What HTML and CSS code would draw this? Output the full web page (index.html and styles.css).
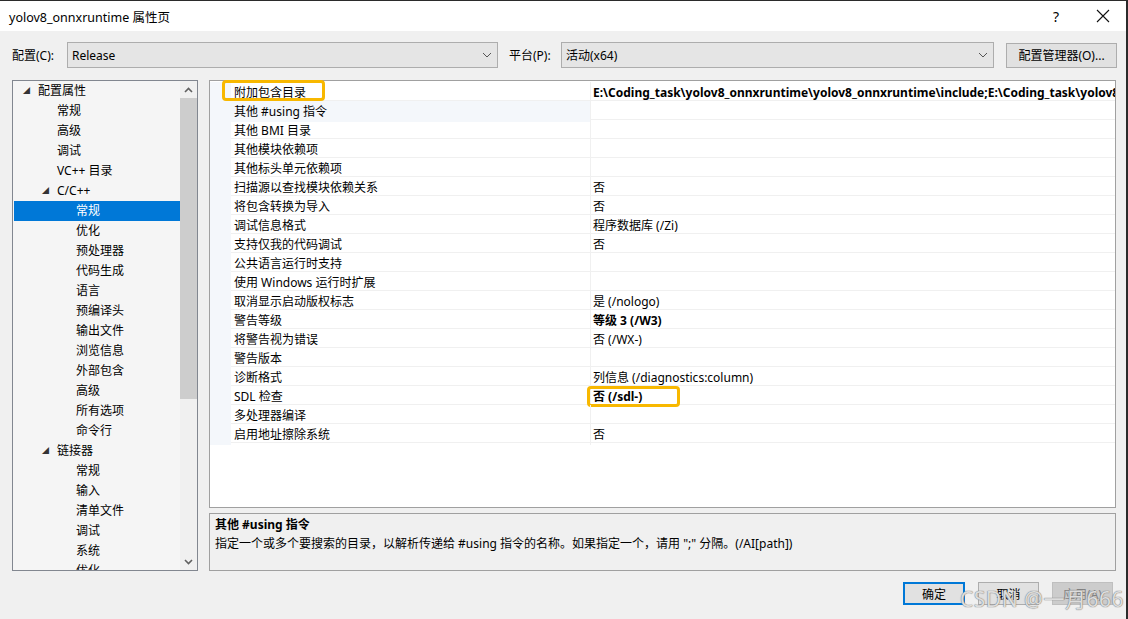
FILE: index.html
```html
<!DOCTYPE html>
<html lang="zh-CN">
<head>
    <meta charset="UTF-8">
    <title>yolov8_onnxruntime 属性页</title>
    <link rel="stylesheet" href="styles.css">
</head>
<body>
<div class="window">
    <div class="titlebar">
        <span class="title">yolov8_onnxruntime 属性页</span>
        <span class="title-btn help">?</span>
        <span class="title-btn close">
            <svg width="14" height="14" viewBox="0 0 14 14"><path d="M1 1 L13 13 M13 1 L1 13" stroke="#111" stroke-width="1.1" fill="none"/></svg>
        </span>
    </div>

    <div class="config-row">
        <label class="lbl">配置(C):</label>
        <div class="combo combo-config">
            <span>Release</span>
            <svg class="chev" width="10" height="6" viewBox="0 0 10 6"><path d="M1 1 L5 5 L9 1" stroke="#555" stroke-width="1" fill="none"/></svg>
        </div>
        <label class="lbl lbl-platform">平台(P):</label>
        <div class="combo combo-platform">
            <span>活动(x64)</span>
            <svg class="chev" width="10" height="6" viewBox="0 0 10 6"><path d="M1 1 L5 5 L9 1" stroke="#555" stroke-width="1" fill="none"/></svg>
        </div>
        <button class="btn btn-manager">配置管理器(O)...</button>
    </div>

    <div class="main">
        <div class="tree">
            <div class="tree-list">
                <div class="node lv0"><span class="arrow">◢</span>配置属性</div>
                <div class="node lv1">常规</div>
                <div class="node lv1">高级</div>
                <div class="node lv1">调试</div>
                <div class="node lv1">VC++ 目录</div>
                <div class="node lv1 open"><span class="arrow">◢</span>C/C++</div>
                <div class="node lv2 selected">常规</div>
                <div class="node lv2">优化</div>
                <div class="node lv2">预处理器</div>
                <div class="node lv2">代码生成</div>
                <div class="node lv2">语言</div>
                <div class="node lv2">预编译头</div>
                <div class="node lv2">输出文件</div>
                <div class="node lv2">浏览信息</div>
                <div class="node lv2">外部包含</div>
                <div class="node lv2">高级</div>
                <div class="node lv2">所有选项</div>
                <div class="node lv2">命令行</div>
                <div class="node lv1 open"><span class="arrow">◢</span>链接器</div>
                <div class="node lv2">常规</div>
                <div class="node lv2">输入</div>
                <div class="node lv2">清单文件</div>
                <div class="node lv2">调试</div>
                <div class="node lv2">系统</div>
                <div class="node lv2">优化</div>
            </div>
            <div class="scrollbar">
                <div class="sb-btn">
                    <svg width="9" height="6" viewBox="0 0 9 6"><path d="M1 5 L4.5 1.5 L8 5" stroke="#606060" stroke-width="1.6" fill="none"/></svg>
                </div>
                <div class="sb-track"><div class="sb-thumb"></div></div>
                <div class="sb-btn">
                    <svg width="9" height="6" viewBox="0 0 9 6"><path d="M1 1 L4.5 4.5 L8 1" stroke="#606060" stroke-width="1.6" fill="none"/></svg>
                </div>
            </div>
        </div>

        <div class="right">
            <div class="grid">
                <div class="row"><div class="gutter"></div><div class="name"><span class="mark mark-name"></span>附加包含目录</div><div class="value bold">E:\Coding_task\yolov8_onnxruntime\yolov8_onnxruntime\include;E:\Coding_task\yolov8_onnxruntime\onnxruntime\include</div></div>
                <div class="row hover"><div class="gutter"></div><div class="name">其他 #using 指令</div><div class="value"></div></div>
                <div class="row"><div class="gutter"></div><div class="name">其他 BMI 目录</div><div class="value"></div></div>
                <div class="row"><div class="gutter"></div><div class="name">其他模块依赖项</div><div class="value"></div></div>
                <div class="row"><div class="gutter"></div><div class="name">其他标头单元依赖项</div><div class="value"></div></div>
                <div class="row"><div class="gutter"></div><div class="name">扫描源以查找模块依赖关系</div><div class="value">否</div></div>
                <div class="row"><div class="gutter"></div><div class="name">将包含转换为导入</div><div class="value">否</div></div>
                <div class="row"><div class="gutter"></div><div class="name">调试信息格式</div><div class="value">程序数据库 (/Zi)</div></div>
                <div class="row"><div class="gutter"></div><div class="name">支持仅我的代码调试</div><div class="value">否</div></div>
                <div class="row"><div class="gutter"></div><div class="name">公共语言运行时支持</div><div class="value"></div></div>
                <div class="row"><div class="gutter"></div><div class="name">使用 Windows 运行时扩展</div><div class="value"></div></div>
                <div class="row"><div class="gutter"></div><div class="name">取消显示启动版权标志</div><div class="value">是 (/nologo)</div></div>
                <div class="row"><div class="gutter"></div><div class="name">警告等级</div><div class="value bold">等级 3 (/W3)</div></div>
                <div class="row"><div class="gutter"></div><div class="name">将警告视为错误</div><div class="value">否 (/WX-)</div></div>
                <div class="row"><div class="gutter"></div><div class="name">警告版本</div><div class="value"></div></div>
                <div class="row"><div class="gutter"></div><div class="name">诊断格式</div><div class="value">列信息 (/diagnostics:column)</div></div>
                <div class="row"><div class="gutter"></div><div class="name">SDL 检查</div><div class="value bold"><span class="mark mark-value"></span>否 (/sdl-)</div></div>
                <div class="row"><div class="gutter"></div><div class="name">多处理器编译</div><div class="value"></div></div>
                <div class="row"><div class="gutter"></div><div class="name">启用地址擦除系统</div><div class="value">否</div></div>
            </div>
            <div class="desc">
                <div class="desc-title">其他 #using 指令</div>
                <div class="desc-text">指定一个或多个要搜索的目录，以解析传递给 #using 指令的名称。如果指定一个，请用 ";" 分隔。(/AI[path])</div>
            </div>
        </div>
    </div>

    <div class="footer">
        <button class="btn btn-ok">确定</button>
        <button class="btn">取消</button>
        <button class="btn btn-disabled">应用(A)</button>
    </div>

    <div class="watermark">CSDN @一月666</div>
</div>
</body>
</html>
```

FILE: styles.css
```css
body {
    margin: 0;
    background-color: #2b2b2b;
}

.window {
    width: 1126px;
    height: 618px;
    margin-top: 1px;
    background-color: #f0f0f0;
    font-family: "Noto Sans", "Noto Sans CJK SC", sans-serif;
    font-size: 12px;
    color: #000;
    position: relative;
    overflow: hidden;
}

.titlebar {
    height: 30px;
    background-color: #fff;
    display: flex;
    align-items: center;
    padding-left: 9px;
}

.title {
    flex: 1;
    font-size: 12.5px;
}

.title-btn {
    width: 46px;
    height: 30px;
    display: flex;
    align-items: center;
    justify-content: center;
    font-size: 14px;
}

.help {
    margin-right: 1px;
}

.config-row {
    display: flex;
    align-items: center;
    height: 26px;
    margin-top: 11px;
    padding-left: 12px;
}

.lbl {
    width: 55px;
}

.lbl-platform {
    margin-left: 11px;
    width: 52px;
}

.combo {
    border: 1px solid #adadad;
    background-color: #e5e5e5;
    display: flex;
    align-items: center;
    padding-left: 4px;
    box-sizing: border-box;
    height: 26px;
}

.combo span {
    flex: 1;
}

.chev {
    margin-right: 5px;
}

.combo-config {
    width: 431px;
}

.combo-platform {
    width: 433px;
}

.btn {
    font-family: inherit;
    font-size: 12px;
    background-color: #e1e1e1;
    border: 1px solid #adadad;
    color: #000;
    padding: 0;
    height: 23px;
    width: 61px;
}

.btn-manager {
    margin-left: 12px;
    width: 111px;
    height: 25px;
}

.main {
    display: flex;
    margin-top: 12px;
    padding-left: 12px;
    gap: 11px;
    height: 491px;
}

.tree {
    width: 186px;
    border: 1px solid #828790;
    background-color: #f5f5f5;
    box-sizing: border-box;
    display: flex;
    overflow: hidden;
}

.tree-list {
    flex: 1;
    padding-left: 1px;
    overflow: hidden;
}

.node {
    height: 20px;
    line-height: 20px;
    white-space: nowrap;
}

.lv0 {
    padding-left: 9px;
}

.lv1 {
    padding-left: 43px;
}

.lv1.open {
    padding-left: 28px;
}

.lv2 {
    padding-left: 62px;
}

.arrow {
    display: inline-block;
    width: 15px;
    font-size: 7px;
    color: #333;
    vertical-align: top;
}

.selected {
    background-color: #0078d7;
    color: #fff;
}

.scrollbar {
    width: 17px;
    display: flex;
    flex-direction: column;
    background-color: #f0f0f0;
}

.sb-btn {
    height: 17px;
    display: flex;
    align-items: center;
    justify-content: center;
}

.sb-track {
    flex: 1;
}

.sb-thumb {
    height: 301px;
    background-color: #cdcdcd;
}

.right {
    width: 907px;
    display: flex;
    flex-direction: column;
    gap: 5px;
}

.grid {
    height: 428px;
    border: 1px solid #a0a0a0;
    background-color: #fff;
    box-sizing: border-box;
    padding-top: 1px;
}

.row {
    display: grid;
    grid-template-columns: 21px 359px 1fr;
    height: 19px;
    line-height: 21px;
    border-bottom: 1px solid #f0f0f0;
    box-sizing: border-box;
}

.gutter {
    background-color: #f4f7fb;
}

.name {
    padding-left: 3px;
    white-space: nowrap;
    position: relative;
}

.value {
    padding-left: 2px;
    border-left: 1px solid #f0f0f0;
    white-space: nowrap;
    overflow: hidden;
    position: relative;
}

.hover .name {
    background-color: #f4f7fb;
}

.bold {
    font-weight: bold;
}

.mark {
    position: absolute;
    border: 3px solid #f8b800;
    border-radius: 4px;
    box-sizing: border-box;
}

.mark-name {
    left: -9px;
    top: -2px;
    width: 103px;
    height: 21px;
}

.mark-value {
    left: -4px;
    top: 0;
    width: 93px;
    height: 21px;
}

.value.bold {
    overflow: visible;
}

.row:first-child .value {
    overflow: hidden;
}

.desc {
    height: 58px;
    border: 1px solid #a0a0a0;
    box-sizing: border-box;
    padding: 1px 5px;
    line-height: 19px;
}

.desc-title {
    font-weight: bold;
}

.footer {
    display: flex;
    justify-content: flex-end;
    gap: 13px;
    margin-top: 11px;
    padding-right: 13px;
}

.btn-ok {
    border: 2px solid #0078d7;
    width: 62px;
}

.btn-disabled {
    background-color: #cccccc;
    border-color: #bfbfbf;
    color: #838383;
}

.watermark {
    position: absolute;
    right: 2px;
    bottom: 6px;
    font-size: 21px;
    color: rgba(255, 255, 255, 0.75);
    text-shadow: 0 0 1px #777, 0 0 1px #777;
    letter-spacing: 0.5px;
}
```
